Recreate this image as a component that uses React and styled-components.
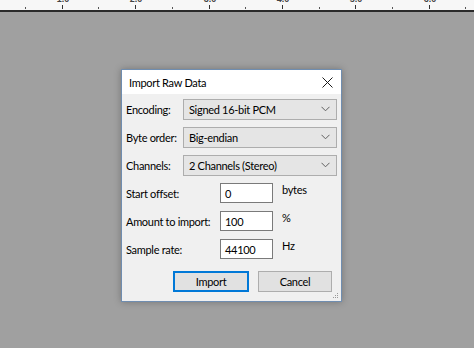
import React from 'react';
import styled, { createGlobalStyle } from 'styled-components';

const GlobalStyle = createGlobalStyle`
  html, body {
    margin: 0;
    padding: 0;
    background: #a0a0a0;
  }
  body {
    width: 474px;
    height: 348px;
    overflow: hidden;
    font-family: Lato, "Noto Sans", sans-serif;
  }
`;

const Ruler = () => {
  const minor = [];
  const major = [];
  for (let i = 0; i < 13; i++) {
    const x = 25 + i * 36.7;
    if (i % 2 === 1) major.push(x);
    else minor.push(x);
  }
  const labels = ['1.0', '2.0', '3.0', '4.0', '5.0', '6.0'];
  return (
    <RulerSvg width={474} height={12} viewBox="0 0 474 12">
      <rect x={0} y={0} width={474} height={10} fill="#f7f7f7" />
      <rect x={0} y={10} width={474} height={2} fill="#2b2b2b" />
      {minor.map((x) => (
        <rect key={x} x={Math.round(x)} y={7} width={1} height={2} fill="#555" />
      ))}
      {major.map((x, i) => (
        <g key={x}>
          <rect x={Math.round(x)} y={5} width={1} height={4} fill="#333" />
          <text x={Math.round(x) + 1} y={2} fontSize={9} fontWeight="bold" textAnchor="middle" fill="#444" fontFamily="Liberation Sans, sans-serif">{labels[i]}</text>
        </g>
      ))}
    </RulerSvg>
  );
};

const RulerSvg = styled.svg`
  display: block;
`;

const Stage = styled.div`
  padding: 57px 0 0 121px;
`;

const Dialog = styled.div`
  position: relative;
  width: 219px;
  height: 231px;
  border: 1px solid #6f8db0;
  background: #f0f0f0;
  box-shadow: 0 0 7px rgba(0, 0, 0, 0.28);
  display: flex;
  flex-direction: column;
  font-size: 11px;
  letter-spacing: -0.3px;
  color: #000;
  white-space: nowrap;
`;

const TitleBar = styled.div`
  height: 24px;
  background: #fff;
  display: flex;
  align-items: center;
  justify-content: space-between;
  padding: 0 8px 0 7px;
`;

const CloseIcon = styled.svg`
  display: block;
`;

const Body = styled.div`
  padding: 1px 4px 0 4px;
  display: flex;
  flex-direction: column;
`;

const Row = styled.div`
  height: 28px;
  display: flex;
  align-items: center;
`;

const Label = styled.div`
  width: ${(p) => p.$w}px;
  flex: none;
`;

const Select = styled.div`
  flex: 1;
  height: 19px;
  border: 1px solid #adadad;
  background: #e5e5e5;
  display: flex;
  align-items: center;
  justify-content: space-between;
  padding: 0 6px 0 5px;
`;

const Input = styled.div`
  width: 47px;
  height: 18px;
  border: 1px solid #7a7a7a;
  background: #fff;
  display: flex;
  align-items: center;
  padding-left: 4px;
`;

const Unit = styled.div`
  margin-left: 9px;
  margin-top: -8px;
`;

const Buttons = styled.div`
  display: flex;
  justify-content: flex-end;
  gap: 9px;
  padding-right: 5px;
  margin-top: 8px;
`;

const Button = styled.div`
  width: ${(p) => p.$w}px;
  height: ${(p) => (p.$default ? 17 : 19)}px;
  border: ${(p) => (p.$default ? '2px solid #0078d7' : '1px solid #adadad')};
  background: #e1e1e1;
  display: flex;
  align-items: center;
  justify-content: center;
`;

const Grip = styled.svg`
  position: absolute;
  right: 2px;
  bottom: 2px;
`;

const Chevron = () => (
  <svg width={9} height={6} viewBox="0 0 9 6">
    <polyline points="0.5,0.8 4.5,4.8 8.5,0.8" fill="none" stroke="#606060" strokeWidth={1} />
  </svg>
);

const selects = [
  ['Encoding:', 'Signed 16-bit PCM'],
  ['Byte order:', 'Big-endian'],
  ['Channels:', '2 Channels (Stereo)'],
];

const fields = [
  ['Start offset:', '0', 'bytes'],
  ['Amount to import:', '100', '%'],
  ['Sample rate:', '44100', 'Hz'],
];

export default function App() {
  return (
    <>
      <GlobalStyle />
      <Ruler />
      <Stage>
        <Dialog>
          <TitleBar>
            <span>Import Raw Data</span>
            <CloseIcon width={11} height={11} viewBox="0 0 11 11">
              <path d="M0.5 0.5 L10.5 10.5 M10.5 0.5 L0.5 10.5" stroke="#1a1a1a" strokeWidth={1} />
            </CloseIcon>
          </TitleBar>
          <Body>
            {selects.map(([l, v]) => (
              <Row key={l}>
                <Label $w={57}>{l}</Label>
                <Select>
                  <span>{v}</span>
                  <Chevron />
                </Select>
              </Row>
            ))}
            {fields.map(([l, v, u]) => (
              <Row key={l}>
                <Label $w={94}>{l}</Label>
                <Input>{v}</Input>
                <Unit>{u}</Unit>
              </Row>
            ))}
            <Buttons>
              <Button $w={72} $default>Import</Button>
              <Button $w={72}>Cancel</Button>
            </Buttons>
          </Body>
          <Grip width={6} height={6} viewBox="0 0 6 6">
            <rect x={4} y={0} width={1} height={1} fill="#999" />
            <rect x={2} y={2} width={1} height={1} fill="#999" />
            <rect x={4} y={2} width={1} height={1} fill="#999" />
            <rect x={0} y={4} width={1} height={1} fill="#999" />
            <rect x={2} y={4} width={1} height={1} fill="#999" />
            <rect x={4} y={4} width={1} height={1} fill="#999" />
          </Grip>
        </Dialog>
      </Stage>
    </>
  );
}
